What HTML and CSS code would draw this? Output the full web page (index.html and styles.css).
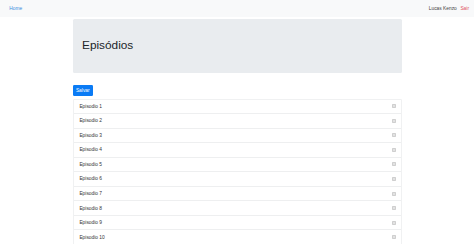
FILE: index.html
```html
<!DOCTYPE html>
<html lang="pt-BR">
<head>
  <meta charset="UTF-8" />
  <meta name="viewport" content="width=device-width, initial-scale=1.0" />
  <title>Episódios</title>
  <link rel="stylesheet" href="styles.css">
</head>
<body>
  <nav class="navbar">
    <a href="#" class="nav-link">Home</a>
    <div class="nav-user">
      <span class="user-name">Lucas Kenzo</span>
      <a href="#" class="logout">Sair</a>
    </div>
  </nav>

  <div class="container">
    <div class="jumbotron">
      <h1>Episódios</h1>
    </div>

    <button class="btn-primary">Salvar</button>

    <ul class="list-group">
      <li class="list-item"><span>Episodio 1</span><span class="check"></span></li>
      <li class="list-item"><span>Episodio 2</span><span class="check"></span></li>
      <li class="list-item"><span>Episodio 3</span><span class="check"></span></li>
      <li class="list-item"><span>Episodio 4</span><span class="check"></span></li>
      <li class="list-item"><span>Episodio 5</span><span class="check"></span></li>
      <li class="list-item"><span>Episodio 6</span><span class="check"></span></li>
      <li class="list-item"><span>Episodio 7</span><span class="check"></span></li>
      <li class="list-item"><span>Episodio 8</span><span class="check"></span></li>
      <li class="list-item"><span>Episodio 9</span><span class="check"></span></li>
      <li class="list-item"><span>Episodio 10</span><span class="check"></span></li>
    </ul>
  </div>
</body>
</html>
```

FILE: styles.css
```css
* {
  box-sizing: border-box;
  padding: 0;
  margin: 0;
}

body {
  font-family: 'Liberation Sans', Arial, sans-serif;
  font-size: 4.85px;
  line-height: 1.5;
  color: #333;
  background: #fff;
  overflow: hidden;
}

.navbar {
  display: flex;
  justify-content: space-between;
  align-items: center;
  height: 16.6px;
  padding: 0 5px 0 9.3px;
  background-color: #f8f9fa;
}

.nav-link {
  color: #3c8ce0;
  text-decoration: none;
}

.nav-user {
  display: flex;
  gap: 3.6px;
}

.user-name {
  color: #444;
}

.logout {
  color: #e0505e;
  text-decoration: none;
}

.container {
  width: 329px;
  margin: 2.4px auto 0;
}

.jumbotron {
  background-color: #e9ecef;
  border-radius: 1.5px;
  padding: 18.9px 9.5px;
  margin-bottom: 11.6px;
}

h1 {
  font-size: 11.84px;
  font-weight: 400;
  line-height: 1.2;
  margin-bottom: 2.4px;
  color: #212529;
}

.btn-primary {
  display: block;
  height: 11.2px;
  padding: 0 3.4px;
  font-family: inherit;
  font-size: 4.85px;
  color: #fff;
  background-color: #0a7bf5;
  border: none;
  border-radius: 1.2px;
  margin-bottom: 2.4px;
}

.list-group {
  list-style: none;
  border: 1px solid #f0f1f2;
  border-bottom: none;
  border-radius: 1.2px;
}

.list-item {
  display: flex;
  justify-content: space-between;
  align-items: center;
  height: 14.56px;
  padding: 0 4.6px 0 5.9px;
  border-bottom: 1px solid #eeeff0;
}

.check {
  width: 4px;
  height: 4px;
  border: 0.6px solid #cfcfcf;
  border-radius: 0.8px;
  background-color: #e2e2e2;
}
```
